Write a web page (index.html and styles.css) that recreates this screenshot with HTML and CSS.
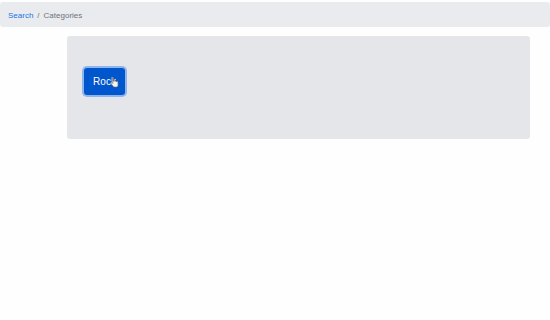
FILE: index.html
```html
<!DOCTYPE html>
<html lang="en">
<head>
    <meta charset="UTF-8">
    <title>Categories</title>
    <link rel="stylesheet" href="styles.css">
</head>
<body>
    <nav class="breadcrumb">
        <a href="#">Search</a>
        <span class="sep">/</span>
        <span class="current">Categories</span>
    </nav>
    <div class="page">
        <div class="panel">
            <button class="btn">Rock
                <svg class="cursor" width="9" height="11" viewBox="0 0 8 10">
                    <path d="M2.5 0.8v5l-1-1c-.5-.4-1.2 0-.9.6l1.8 2.8c.4.6 1 1 1.8 1h1.2c1 0 1.800-.8 1.8-1.8V4.6c0-.4-.3-.7-.7-.7s-.7.3-.7.7V4c0-.4-.3-.7-.7-.7s-.7.3-.7.7v-.2c0-.4-.3-.7-.7-.7s-.7.3-.7.7V.8c0-.4-.3-.7-.7-.7s-.7.3-.7.7z" fill="#f4f4f4" stroke="#666" stroke-width=".6"/>
                </svg>
            </button>
        </div>
    </div>
</body>
</html>
```

FILE: styles.css
```css
body {
    margin: 0;
    padding-top: 2px;
    font-family: "Liberation Sans", Arial, sans-serif;
    background: #fefefe;
}
.breadcrumb {
    display: flex;
    align-items: center;
    gap: 4px;
    height: 25px;
    padding: 1px 8px 0;
    box-sizing: border-box;
    background: #e9ebee;
    border-radius: 3px;
    font-size: 8px;
}
.breadcrumb a {
    color: #1a73e8;
    text-decoration: none;
}
.sep, .current {
    color: #6c757d;
}
.page {
    padding: 9px 20px 0 67px;
}
.panel {
    background: #e4e6e9;
    border-radius: 3px;
    height: 103px;
    padding: 32px 16px 0;
    box-sizing: border-box;
}
.btn {
    position: relative;
    width: 41px;
    height: 27px;
    margin-left: 1px;
    background: #0056cc;
    color: #fff;
    border: none;
    border-radius: 3px;
    box-shadow: 0 0 0 2px #8fb4ee;
    font-family: inherit;
    font-size: 10px;
    padding: 0;
    cursor: pointer;
}
.cursor {
    position: absolute;
    left: 26px;
    top: 9px;
}
```
